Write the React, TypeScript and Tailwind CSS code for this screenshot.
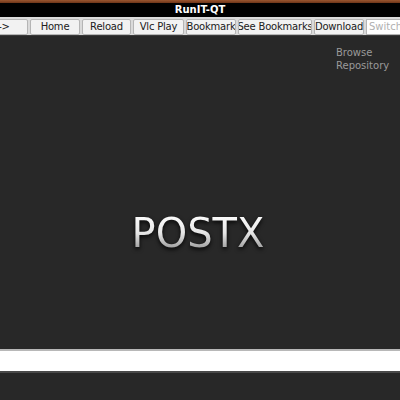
import React from 'react';

const buttons = [
  { label: '->', w: 'w-[48px] -ml-[20px]' },
  { label: 'Home', w: 'w-[50px]' },
  { label: 'Reload', w: 'w-[49px]' },
  { label: 'Vlc Play', w: 'w-[51px]' },
  { label: 'Bookmark', w: 'w-[50px]' },
  { label: 'See Bookmarks', w: 'w-[74px]' },
  { label: 'Download', w: 'w-[50px]' },
];

export default function App() {
  return (
    <div className="w-[400px] h-[400px] overflow-hidden bg-[#282828] flex flex-col font-['DejaVu_Sans',sans-serif]">
      {/* window frame */}
      <div className="h-[3px] shrink-0 bg-gradient-to-b from-[#9a5630] to-[#6e3518]" />
      <div className="h-[14px] shrink-0 bg-black flex items-center justify-center">
        <span className="text-[10px] font-bold text-white leading-none">RunIT-QT</span>
      </div>

      {/* toolbar */}
      <div className="h-[19px] shrink-0 bg-[#dadada] flex items-center gap-[2px] pt-[1px] border-b border-[#3a3a3a] overflow-hidden">
        {buttons.map((b) => (
          <button
            key={b.label}
            className={`${b.w} shrink-0 h-[16px] flex items-center justify-center bg-[#f2f2f2] border border-[#b5b5b5] rounded-[2px] text-[10px] tracking-[-0.2px] leading-none text-[#202020] whitespace-nowrap overflow-hidden`}
          >
            {b.label}
          </button>
        ))}
        <div className="w-[50px] shrink-0 h-[16px] flex items-center px-[2px] bg-white border border-[#b5b5b5] text-[10px] leading-none text-[#b0b0b0]">
          Switch
        </div>
      </div>

      {/* content */}
      <main className="h-[313px] shrink-0 flex flex-col">
        <div className="flex justify-end pt-[10px] pr-[16px]">
          <div className="w-[48px] text-[10px] leading-[13px] text-[#9a9a9a]">
            Browse
            <br />
            Repository
          </div>
        </div>
        <div className="flex justify-center pt-[141px] pr-[4px]">
          <span className="text-[40px] leading-none text-transparent bg-clip-text bg-gradient-to-b from-white via-[#e6e6e6] to-[#8c8c8c] drop-shadow-[0_2px_2px_rgba(0,0,0,0.9)]">
            POSTX
          </span>
        </div>
      </main>

      {/* address / status bar */}
      <div className="h-[24px] shrink-0 bg-white border-t-[2px] border-t-[#b8b8b8] border-b-[2px] border-b-[#4a4a4a]" />
      <div className="flex-1 bg-[#282828]" />
    </div>
  );
}
